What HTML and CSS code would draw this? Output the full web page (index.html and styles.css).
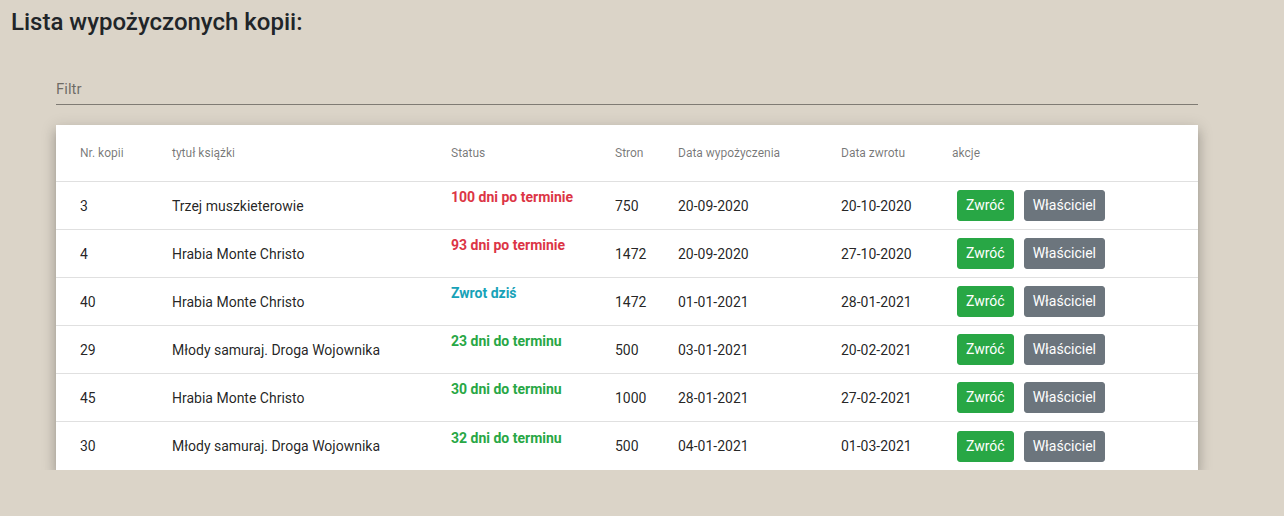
FILE: index.html
```html
<!DOCTYPE html>
<html lang="pl">
<head>
<meta charset="utf-8">
<title>Lista wypożyczonych kopii</title>
<link rel="stylesheet" href="styles.css">
</head>
<body>
<h2 class="page-title">Lista wypożyczonych kopii:</h2>
<div class="content">
  <div class="filter-field">
    <span class="filter-label">Filtr</span>
  </div>
  <div class="table-card">
    <div class="row header-row">
      <div class="cell first">Nr. kopii</div>
      <div class="cell">tytuł książki</div>
      <div class="cell">Status</div>
      <div class="cell">Stron</div>
      <div class="cell">Data wypożyczenia</div>
      <div class="cell">Data zwrotu</div>
      <div class="cell">akcje</div>
    </div>
    <div class="row">
      <div class="cell first">3</div>
      <div class="cell">Trzej muszkieterowie</div>
      <div class="cell"><p class="status danger">100 dni po terminie</p></div>
      <div class="cell">750</div>
      <div class="cell">20-09-2020</div>
      <div class="cell">20-10-2020</div>
      <div class="cell actions"><button class="btn btn-success">Zwróć</button><button class="btn btn-secondary">Właściciel</button></div>
    </div>
    <div class="row">
      <div class="cell first">4</div>
      <div class="cell">Hrabia Monte Christo</div>
      <div class="cell"><p class="status danger">93 dni po terminie</p></div>
      <div class="cell">1472</div>
      <div class="cell">20-09-2020</div>
      <div class="cell">27-10-2020</div>
      <div class="cell actions"><button class="btn btn-success">Zwróć</button><button class="btn btn-secondary">Właściciel</button></div>
    </div>
    <div class="row">
      <div class="cell first">40</div>
      <div class="cell">Hrabia Monte Christo</div>
      <div class="cell"><p class="status info">Zwrot dziś</p></div>
      <div class="cell">1472</div>
      <div class="cell">01-01-2021</div>
      <div class="cell">28-01-2021</div>
      <div class="cell actions"><button class="btn btn-success">Zwróć</button><button class="btn btn-secondary">Właściciel</button></div>
    </div>
    <div class="row">
      <div class="cell first">29</div>
      <div class="cell">Młody samuraj. Droga Wojownika</div>
      <div class="cell"><p class="status success">23 dni do terminu</p></div>
      <div class="cell">500</div>
      <div class="cell">03-01-2021</div>
      <div class="cell">20-02-2021</div>
      <div class="cell actions"><button class="btn btn-success">Zwróć</button><button class="btn btn-secondary">Właściciel</button></div>
    </div>
    <div class="row">
      <div class="cell first">45</div>
      <div class="cell">Hrabia Monte Christo</div>
      <div class="cell"><p class="status success">30 dni do terminu</p></div>
      <div class="cell">1000</div>
      <div class="cell">28-01-2021</div>
      <div class="cell">27-02-2021</div>
      <div class="cell actions"><button class="btn btn-success">Zwróć</button><button class="btn btn-secondary">Właściciel</button></div>
    </div>
    <div class="row last">
      <div class="cell first">30</div>
      <div class="cell">Młody samuraj. Droga Wojownika</div>
      <div class="cell"><p class="status success">32 dni do terminu</p></div>
      <div class="cell">500</div>
      <div class="cell">04-01-2021</div>
      <div class="cell">01-03-2021</div>
      <div class="cell actions"><button class="btn btn-success">Zwróć</button><button class="btn btn-secondary">Właściciel</button></div>
    </div>
  </div>
</div>
</body>
</html>
```
FILE: styles.css
```css
html, body {
  margin: 0;
  padding: 0;
}
body {
  background: #dbd4c8;
  font-family: Roboto, "Liberation Sans", sans-serif;
  color: rgba(0, 0, 0, 0.87);
  padding: 0 0 0 11px;
}
.page-title {
  margin: 0;
  padding-top: 6px;
  font-size: 24px;
  line-height: 32px;
  font-weight: 500;
  color: #212529;
}
.content {
  margin-left: 45px;
  width: 1142px;
}
.filter-field {
  margin-top: 37px;
  padding-top: 5px;
  height: 24px;
  border-bottom: 1px solid rgba(0, 0, 0, 0.42);
  display: flex;
  align-items: flex-start;
}
.filter-label {
  font-size: 15px;
  line-height: 18px;
  color: rgba(0, 0, 0, 0.5);
}
.table-card {
  margin-top: 20px;
  background: #fff;
  box-shadow: 0 5px 5px -3px rgba(0,0,0,.2), 0 8px 10px 1px rgba(0,0,0,.14), 0 3px 14px 2px rgba(0,0,0,.12);
}
.row {
  display: grid;
  grid-template-columns: 116px 279px 164px 63px 163px 111px 1fr;
  height: 48px;
  align-items: center;
  border-bottom: 1px solid rgba(0, 0, 0, 0.12);
  box-sizing: border-box;
  font-size: 14px;
}
.row.last {
  border-bottom: none;
}
.header-row {
  height: 57px;
  font-size: 12px;
  font-weight: 400;
  color: rgba(0, 0, 0, 0.54);
}
.cell {
  display: flex;
  align-items: center;
}
.cell.first {
  padding-left: 24px;
}
.status {
  margin: 0 0 16px 0;
  font-size: 14px;
  line-height: 21px;
  font-weight: 700;
}
.status.danger { color: #dc3545; }
.status.info { color: #17a2b8; }
.status.success { color: #28a745; }
.actions {
  gap: 10px;
  padding-left: 5px;
}
.btn {
  font-family: Roboto, "Liberation Sans", sans-serif;
  font-size: 14px;
  line-height: 21px;
  padding: 4px 8px;
  border: 1px solid transparent;
  border-radius: 3px;
  color: #fff;
  cursor: pointer;
}
.btn-success {
  background: #28a745;
  border-color: #28a745;
}
.btn-secondary {
  background: #6c757d;
  border-color: #6c757d;
}
```
